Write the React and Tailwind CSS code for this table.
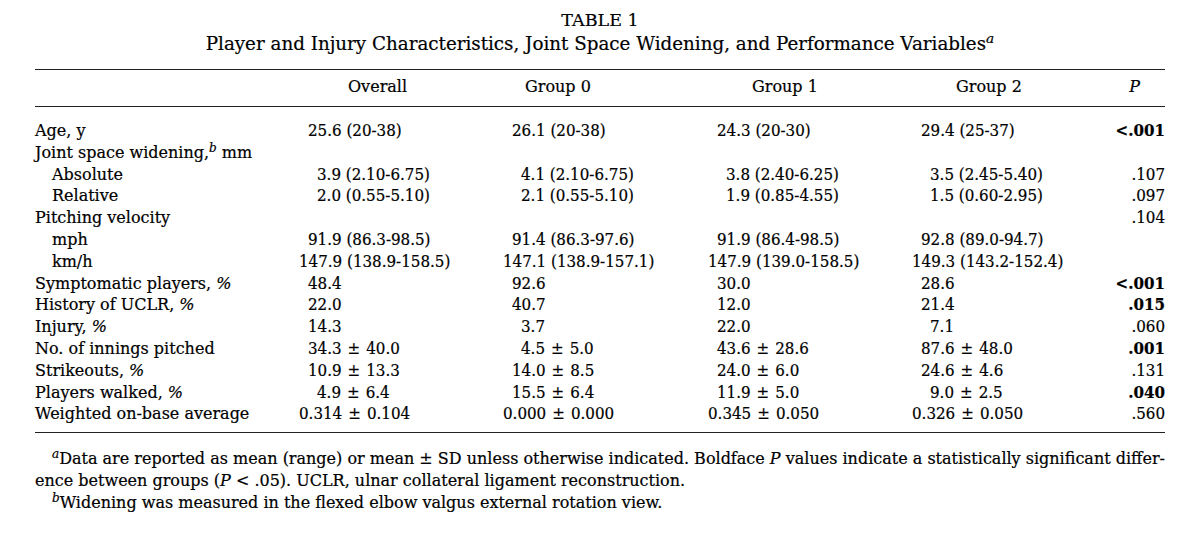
const cols = ["Overall", "Group 0", "Group 1", "Group 2"];

// pad = how many digit widths the value is pushed in, so the decimals line up
const pads = ["pl-0", "pl-[9px]", "pl-[18px]"];

const rows = [
  {
    label: "Age, y",
    cells: [["25.6 (20-38)", 1], ["26.1 (20-38)", 1], ["24.3 (20-30)", 1], ["29.4 (25-37)", 1]],
    p: "<.001",
    bold: true,
  },
  {
    label: (
      <>
        Joint space widening,<sup className="italic">b</sup> mm
      </>
    ),
  },
  {
    label: "Absolute",
    sub: true,
    cells: [["3.9 (2.10-6.75)", 2], ["4.1 (2.10-6.75)", 2], ["3.8 (2.40-6.25)", 2], ["3.5 (2.45-5.40)", 2]],
    p: ".107",
  },
  {
    label: "Relative",
    sub: true,
    cells: [["2.0 (0.55-5.10)", 2], ["2.1 (0.55-5.10)", 2], ["1.9 (0.85-4.55)", 2], ["1.5 (0.60-2.95)", 2]],
    p: ".097",
  },
  { label: "Pitching velocity", p: ".104" },
  {
    label: "mph",
    sub: true,
    cells: [["91.9 (86.3-98.5)", 1], ["91.4 (86.3-97.6)", 1], ["91.9 (86.4-98.5)", 1], ["92.8 (89.0-94.7)", 1]],
  },
  {
    label: "km/h",
    sub: true,
    cells: [["147.9 (138.9-158.5)", 0], ["147.1 (138.9-157.1)", 0], ["147.9 (139.0-158.5)", 0], ["149.3 (143.2-152.4)", 0]],
  },
  {
    label: "Symptomatic players, ",
    pct: true,
    cells: [["48.4", 1], ["92.6", 1], ["30.0", 1], ["28.6", 1]],
    p: "<.001",
    bold: true,
  },
  {
    label: "History of UCLR, ",
    pct: true,
    cells: [["22.0", 1], ["40.7", 1], ["12.0", 1], ["21.4", 1]],
    p: ".015",
    bold: true,
  },
  {
    label: "Injury, ",
    pct: true,
    cells: [["14.3", 1], ["3.7", 2], ["22.0", 1], ["7.1", 2]],
    p: ".060",
  },
  {
    label: "No. of innings pitched",
    cells: [["34.3 ± 40.0", 1], ["4.5 ± 5.0", 2], ["43.6 ± 28.6", 1], ["87.6 ± 48.0", 1]],
    p: ".001",
    bold: true,
  },
  {
    label: "Strikeouts, ",
    pct: true,
    cells: [["10.9 ± 13.3", 1], ["14.0 ± 8.5", 1], ["24.0 ± 6.0", 1], ["24.6 ± 4.6", 1]],
    p: ".131",
  },
  {
    label: "Players walked, ",
    pct: true,
    cells: [["4.9 ± 6.4", 2], ["15.5 ± 6.4", 1], ["11.9 ± 5.0", 1], ["9.0 ± 2.5", 2]],
    p: ".040",
    bold: true,
  },
  {
    label: "Weighted on-base average",
    cells: [["0.314 ± 0.104", 0], ["0.000 ± 0.000", 0], ["0.345 ± 0.050", 0], ["0.326 ± 0.050", 0]],
    p: ".560",
  },
];

const colWidths = ["w-[204px]", "w-[205px]", "w-[204px]", "w-[200px]"];
const headPads = ["pl-[49px]", "pl-[22px]", "pl-[44px]", "pl-[44px]"];

// mean ± SD gets a bit more air round the sign, like the print
function Value({ text }) {
  if (!text.includes("±")) return text;
  const [a, b] = text.split(" ± ");
  return (
    <>
      {a}
      <span className="px-[6px]">±</span>
      {b}
    </>
  );
}

function Row({ row }) {
  return (
    <div className="flex h-[21.8px] items-center whitespace-nowrap">
      <div className={`w-[264px] ${row.sub ? "pl-[17px]" : ""}`}>
        {row.label}
        {row.pct && <i>%</i>}
      </div>
      {colWidths.map((w, i) => {
        const cell = row.cells ? row.cells[i] : null;
        return (
          <div
            key={i}
            className={`${w} text-[16.8px] [font-stretch:condensed] ${cell ? pads[cell[1]] : ""}`}
          >
            {cell ? <Value text={cell[0]} /> : ""}
          </div>
        );
      })}
      <div
        className={`flex-1 text-right text-[16.8px] [font-stretch:condensed] ${row.bold ? "font-bold" : ""}`}
      >
        {row.p || ""}
      </div>
    </div>
  );
}

export default function App() {
  return (
    <div className="w-[1200px] h-[550px] overflow-hidden bg-white px-[35px] pt-[8px] text-[16px] leading-[21.8px] text-black [-webkit-text-stroke:0.2px_black] font-['DejaVu_Serif',serif]">
      <div className="text-center leading-[24px]">
        <div className="text-[17.5px]">TABLE 1</div>
        <div className="text-[18.3px]">
          Player and Injury Characteristics, Joint Space Widening, and Performance Variables
          <sup className="italic">a</sup>
        </div>
      </div>

      <div className="mt-[13px] border-t-[1.5px] border-[#222]" />
      <div className="flex h-[36px] items-center pb-[2px] whitespace-nowrap">
        <div className="w-[264px]" />
        {cols.map((c, i) => (
          <div key={c} className={`${colWidths[i]} ${headPads[i]}`}>
            {c}
          </div>
        ))}
        <div className="flex-1 pr-[25px] text-right italic">P</div>
      </div>
      <div className="border-t-[1.5px] border-[#222]" />

      <div className="pt-[13px] pb-[7px]">
        {rows.map((r, i) => (
          <Row key={i} row={r} />
        ))}
      </div>
      <div className="border-t-[1.5px] border-[#222]" />

      <div className="mt-[15px] text-[16px] leading-[22px]">
        <p className="pl-[17px] text-justify [text-align-last:justify]">
          <sup className="italic">a</sup>Data are reported as mean (range) or mean ± SD unless otherwise indicated.
          Boldface <i>P</i> values indicate a statistically significant differ-
        </p>
        <p>
          ence between groups (<i>P</i> &lt; .05). UCLR, ulnar collateral ligament reconstruction.
        </p>
        <p className="pl-[17px]">
          <sup className="italic">b</sup>Widening was measured in the flexed elbow valgus external rotation view.
        </p>
      </div>
    </div>
  );
}
